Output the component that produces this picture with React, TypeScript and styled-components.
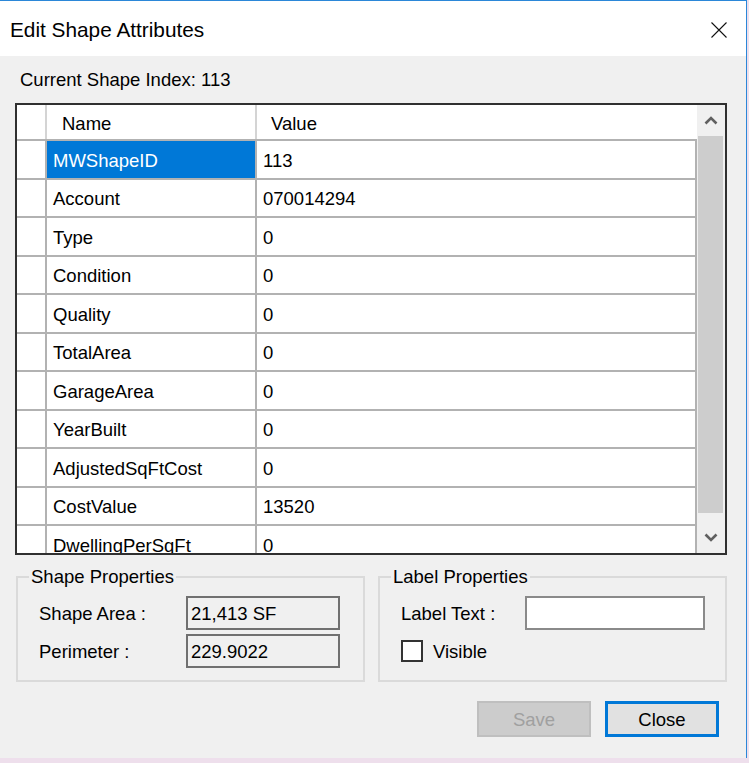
import React from "react";
import styled, { createGlobalStyle } from "styled-components";

const rows: { name: string; value: string }[] = [
  { name: "MWShapeID", value: "113" },
  { name: "Account", value: "070014294" },
  { name: "Type", value: "0" },
  { name: "Condition", value: "0" },
  { name: "Quality", value: "0" },
  { name: "TotalArea", value: "0" },
  { name: "GarageArea", value: "0" },
  { name: "YearBuilt", value: "0" },
  { name: "AdjustedSqFtCost", value: "0" },
  { name: "CostValue", value: "13520" },
  { name: "DwellingPerSqFt", value: "0" },
];

const Chevron = ({ down }: { down?: boolean }) => (
  <svg width="14" height="9" viewBox="0 0 14 9">
    <path
      d={down ? "M1.5 1.5 L7 7 L12.5 1.5" : "M1.5 7.5 L7 2 L12.5 7.5"}
      fill="none"
      stroke="#606060"
      strokeWidth="2.6"
    />
  </svg>
);

const App = () => {
  return (
    <>
      <GlobalStyle />
      <Window>
        <TitleBar>
          <Title>Edit Shape Attributes</Title>
          <svg width="16" height="16" viewBox="0 0 16 16">
            <path d="M0.5 0.5 L15.5 15.5 M15.5 0.5 L0.5 15.5" stroke="#111" strokeWidth="1.1" />
          </svg>
        </TitleBar>
        <Body>
          <IndexLabel>Current Shape Index: 113</IndexLabel>
          <Grid>
            <Table>
              <HeaderRow>
                <HeadCell />
                <HeadCell $pad={15}>Name</HeadCell>
                <HeadCell $pad={14} $last>
                  Value
                </HeadCell>
              </HeaderRow>
              {rows.map((r, i) => (
                <Row key={r.name}>
                  <RowHeader />
                  <Cell $selected={i === 0}>{r.name}</Cell>
                  <Cell>{r.value}</Cell>
                </Row>
              ))}
            </Table>
            <ScrollBar>
              <ArrowButton>
                <Chevron />
              </ArrowButton>
              <Track>
                <Thumb />
              </Track>
              <ArrowButton>
                <Chevron down />
              </ArrowButton>
            </ScrollBar>
          </Grid>

          <GroupRow>
            <Group>
              <Legend>Shape Properties</Legend>
              <GroupContent>
                <FieldRow $labelWidth={148}>
                  <FieldLabel>Shape Area :</FieldLabel>
                  <TextBox $readOnly>21,413 SF</TextBox>
                </FieldRow>
                <FieldRow $labelWidth={148}>
                  <FieldLabel>Perimeter :</FieldLabel>
                  <TextBox $readOnly>229.9022</TextBox>
                </FieldRow>
              </GroupContent>
            </Group>
            <Group>
              <Legend>Label Properties</Legend>
              <GroupContent>
                <FieldRow $labelWidth={125}>
                  <FieldLabel>Label Text :</FieldLabel>
                  <TextBox $width={180} />
                </FieldRow>
                <CheckRow>
                  <CheckBox />
                  <FieldLabel>Visible</FieldLabel>
                </CheckRow>
              </GroupContent>
            </Group>
          </GroupRow>

          <ButtonRow>
            <Button $disabled>Save</Button>
            <Button $default>Close</Button>
          </ButtonRow>
        </Body>
      </Window>
    </>
  );
};

export default App;

const GlobalStyle = createGlobalStyle`
  html, body {
    margin: 0;
    padding: 0;
    background: #eedfec;
    font-family: "Liberation Sans", Arial, sans-serif;
    color: #000;
  }
`;

const Window = styled.div`
  width: 747px;
  height: 758px;
  box-sizing: border-box;
  border-top: 1px solid #2b87d8;
  border-right: 1px solid #2b87d8;
  background: #f0f0f0;
  display: flex;
  flex-direction: column;
`;

const TitleBar = styled.div`
  height: 55px;
  background: #fff;
  display: flex;
  align-items: center;
  justify-content: space-between;
  padding: 3px 19px 0 10px;
  box-sizing: border-box;
`;

const Title = styled.div`
  font-size: 20.8px;
`;

const Body = styled.div`
  flex: 1;
  padding: 12px 19px 0 15px;
  display: flex;
  flex-direction: column;
  font-size: 18.5px;
`;

const IndexLabel = styled.div`
  line-height: 24px;
  margin: 0 0 11px 5px;
`;

const Grid = styled.div`
  height: 452px;
  box-sizing: border-box;
  border: 2px solid #303030;
  background: #fff;
  display: flex;
`;

const Table = styled.div`
  flex: 1;
  overflow: hidden;
`;

const HeaderRow = styled.div`
  display: grid;
  grid-template-columns: 30px 210px 1fr;
  height: 36px;
  box-sizing: border-box;
  border-bottom: 2px solid #b2b2b2;
`;

const HeadCell = styled.div<{ $pad?: number; $last?: boolean }>`
  display: flex;
  align-items: center;
  padding: 3px 0 0 ${(p) => p.$pad ?? 0}px;
  border-right: 2px solid ${(p) => (p.$last ? "transparent" : "#d4d4d4")};
`;

const Row = styled.div`
  display: grid;
  grid-template-columns: 30px 210px 1fr;
  height: 38.5px;
  box-sizing: border-box;
  border-bottom: 2px solid #b2b2b2;
`;

const RowHeader = styled.div`
  border-right: 2px solid #b2b2b2;
`;

const Cell = styled.div<{ $selected?: boolean }>`
  display: flex;
  align-items: center;
  padding: 3px 0 0 6px;
  white-space: nowrap;
  background: ${(p) => (p.$selected ? "#0078d7" : "#fff")};
  color: ${(p) => (p.$selected ? "#fff" : "#000")};
  border-right: 2px solid #b2b2b2;
`;

const ScrollBar = styled.div`
  width: 28px;
  background: #f0f0f0;
  display: flex;
  flex-direction: column;
`;

const ArrowButton = styled.div`
  height: 31px;
  display: flex;
  align-items: center;
  justify-content: center;
`;

const Track = styled.div`
  flex: 1;
  padding: 0 2px 0 1px;
`;

const Thumb = styled.div`
  height: 377px;
  background: #cdcdcd;
`;

const GroupRow = styled.div`
  display: flex;
  gap: 13px;
  margin: 12px 0 0 1px;
`;

const Group = styled.fieldset`
  flex: 1;
  margin: 0;
  padding: 0;
  min-width: 0;
  border: 2px solid #dadada;
`;

const Legend = styled.legend`
  line-height: 20px;
  padding: 0 2px;
  margin-left: 11px;
`;

const GroupContent = styled.div`
  padding: 9px 0 12px 20px;
  display: flex;
  flex-direction: column;
  gap: 4px;
`;

const FieldRow = styled.div<{ $labelWidth: number }>`
  display: grid;
  grid-template-columns: ${(p) => p.$labelWidth}px auto;
  align-items: center;
  height: 34px;
`;

const FieldLabel = styled.span`
  padding: 2px 0 0 1px;
`;

const TextBox = styled.div<{ $readOnly?: boolean; $width?: number }>`
  width: ${(p) => p.$width ?? 154}px;
  height: 34px;
  box-sizing: border-box;
  border: 2px solid ${(p) => (p.$readOnly ? "#707070" : "#8a8a8a")};
  background: ${(p) => (p.$readOnly ? "#f0f0f0" : "#fff")};
  display: flex;
  align-items: center;
  padding: 2px 0 0 3px;
`;

const CheckRow = styled.div`
  display: flex;
  align-items: center;
  gap: 9px;
  height: 34px;
  padding-left: 1px;
`;

const CheckBox = styled.div`
  width: 22px;
  height: 22px;
  box-sizing: border-box;
  border: 2px solid #333;
  background: #fff;
`;

const ButtonRow = styled.div`
  display: flex;
  justify-content: flex-end;
  gap: 14px;
  margin-top: 19px;
  padding-right: 8px;
`;

const Button = styled.div<{ $disabled?: boolean; $default?: boolean }>`
  width: 114px;
  height: 36px;
  box-sizing: border-box;
  display: flex;
  align-items: center;
  justify-content: center;
  padding-top: 2px;
  background: ${(p) => (p.$disabled ? "#cccccc" : "#e1e1e1")};
  color: ${(p) => (p.$disabled ? "#a0a0a0" : "#000")};
  border: ${(p) => (p.$default ? "3px solid #0078d7" : "2px solid #bfbfbf")};
`;
